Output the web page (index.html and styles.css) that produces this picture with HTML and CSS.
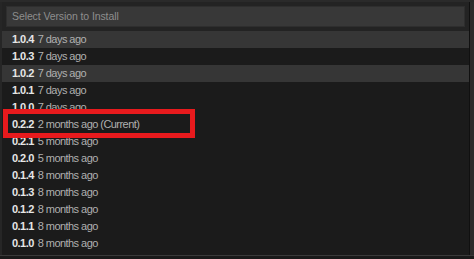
FILE: index.html
```html
<!DOCTYPE html>
<html>
<head>
<meta charset="utf-8">
<link rel="stylesheet" href="styles.css">
</head>
<body>
<div class="frame">
  <div class="picker">
    <div class="input-row">
      <div class="input">Select Version to Install</div>
    </div>
    <ul class="list">
      <li class="row alt"><b>1.0.4</b><span>7 days ago</span></li>
      <li class="row"><b>1.0.3</b><span>7 days ago</span></li>
      <li class="row alt"><b>1.0.2</b><span>7 days ago</span></li>
      <li class="row"><b>1.0.1</b><span>7 days ago</span></li>
      <li class="row"><b>1.0.0</b><span>7 days ago</span></li>
      <li class="row"><b>0.2.2</b><span>2 months ago (Current)</span></li>
      <li class="row"><b>0.2.1</b><span>5 months ago</span></li>
      <li class="row"><b>0.2.0</b><span>5 months ago</span></li>
      <li class="row"><b>0.1.4</b><span>8 months ago</span></li>
      <li class="row"><b>0.1.3</b><span>8 months ago</span></li>
      <li class="row"><b>0.1.2</b><span>8 months ago</span></li>
      <li class="row"><b>0.1.1</b><span>8 months ago</span></li>
      <li class="row"><b>0.1.0</b><span>8 months ago</span></li>
    </ul>
    <div class="highlight"></div>
  </div>
  <div class="scroll-edge"></div>
</div>
</body>
</html>
```
FILE: styles.css
```css
html, body {
  margin: 0;
  padding: 0;
  background: #1a1a1a;
  width: 474px;
  height: 259px;
  overflow: hidden;
  font-family: "Liberation Sans", Arial, sans-serif;
}
.frame {
  display: flex;
  height: 256px;
  border-bottom: 1px solid #3a3a3a;
  border-top: 2px solid #2a2a2a;
  box-sizing: border-box;
}
.picker {
  position: relative;
  flex: 1;
  background: #1b1b1b;
  border-left: 2px solid #262626;
}
.input-row {
  padding: 4px 4px 4px 4px;
  background: #232323;
}
.input {
  height: 19px;
  background: #383838;
  border: 1px solid #2e2e2e;
  color: #8e8e8e;
  font-size: 10.5px;
  letter-spacing: -0.1px;
  line-height: 19px;
  padding-left: 5px;
}
.list {
  list-style: none;
  margin: 0;
  padding: 0;
}
.row {
  height: 17px;
  line-height: 17px;
  padding-left: 10px;
  font-size: 11px;
  letter-spacing: -0.55px;
  color: #b0b0b0;
  display: flex;
  gap: 4px;
}
.row b {
  color: #e6e6e6;
  font-weight: 700;
}
.row.alt {
  background: #363636;
}
.highlight {
  position: absolute;
  left: 1px;
  top: 107px;
  width: 182px;
  height: 19px;
  border: 5px solid #e81a1d;
}
.scroll-edge {
  width: 4px;
  background: #2c2c2c;
  border-left: 1px solid #101010;
}
```
